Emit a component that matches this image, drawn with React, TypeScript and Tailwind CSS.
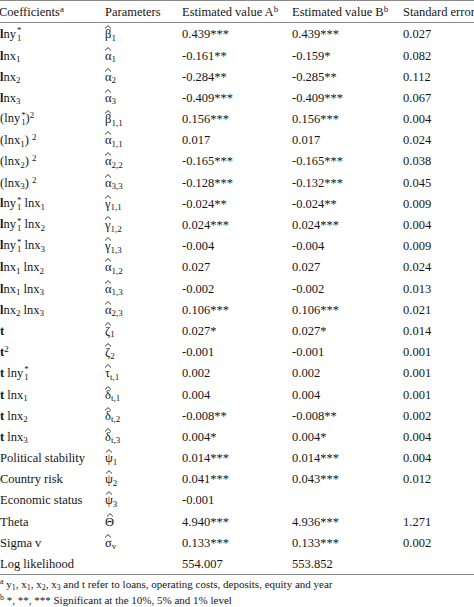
import React from "react";

type Row = {
  coef: React.ReactNode;
  param: React.ReactNode;
  a: string;
  b: string;
  se: string;
};

function Sub({ children }: { children: React.ReactNode }) {
  return <span className="relative top-[0.28em] text-[0.72em] leading-none">{children}</span>;
}

function Sup({ children }: { children: React.ReactNode }) {
  return <span className="relative -top-[0.45em] text-[0.72em] leading-none">{children}</span>;
}

// y*₁ style: star above, index below
function Stack({ top, bottom }: { top: string; bottom: string }) {
  return (
    <span className="inline-flex flex-col items-start text-[0.7em] leading-[0.85] align-[0.5em] ml-px">
      <span>{top}</span>
      <span>{bottom}</span>
    </span>
  );
}

const Lny = () => (
  <span>
    <span className="font-bold">l</span>ny
    <Stack top="*" bottom="1" />
  </span>
);

const Lnx = ({ i, bold = true }: { i: string; bold?: boolean }) => (
  <span>
    {bold ? <span className="font-bold">l</span> : "l"}nx<Sub>{i}</Sub>
  </span>
);

const T = () => <span className="font-bold">t</span>;

function Hat({ sym, sub }: { sym: string; sub?: string }) {
  return (
    <span>
      <span className="relative inline-block">
        {sym}
        <svg
          className="absolute left-1/2 -translate-x-1/2 top-[-3px]"
          width="7"
          height="4"
          viewBox="0 0 7 4"
          fill="none"
        >
          <polyline points="0.5,3.5 3.5,0.6 6.5,3.5" stroke="#222" strokeWidth="0.9" />
        </svg>
      </span>
      {sub && <Sub>{sub}</Sub>}
    </span>
  );
}

const rows: Row[] = [
  { coef: <Lny />, param: <Hat sym="β" sub="1" />, a: "0.439***", b: "0.439***", se: "0.027" },
  { coef: <Lnx i="1" />, param: <Hat sym="α" sub="1" />, a: "-0.161**", b: "-0.159*", se: "0.082" },
  { coef: <Lnx i="2" />, param: <Hat sym="α" sub="2" />, a: "-0.284**", b: "-0.285**", se: "0.112" },
  { coef: <Lnx i="3" />, param: <Hat sym="α" sub="3" />, a: "-0.409***", b: "-0.409***", se: "0.067" },
  {
    coef: (
      <span>
        (lny<Stack top="*" bottom="1" />)<Sup>2</Sup>
      </span>
    ),
    param: <Hat sym="β" sub="1,1" />,
    a: "0.156***",
    b: "0.156***",
    se: "0.004",
  },
  {
    coef: (
      <span>
        (lnx<Sub>1</Sub>) <Sup>2</Sup>
      </span>
    ),
    param: <Hat sym="α" sub="1,1" />,
    a: "0.017",
    b: "0.017",
    se: "0.024",
  },
  {
    coef: (
      <span>
        (lnx<Sub>2</Sub>) <Sup>2</Sup>
      </span>
    ),
    param: <Hat sym="α" sub="2,2" />,
    a: "-0.165***",
    b: "-0.165***",
    se: "0.038",
  },
  {
    coef: (
      <span>
        (lnx<Sub>3</Sub>) <Sup>2</Sup>
      </span>
    ),
    param: <Hat sym="α" sub="3,3" />,
    a: "-0.128***",
    b: "-0.132***",
    se: "0.045",
  },
  {
    coef: (
      <span>
        <Lny /> <Lnx i="1" bold={false} />
      </span>
    ),
    param: <Hat sym="γ" sub="1,1" />,
    a: "-0.024**",
    b: "-0.024**",
    se: "0.009",
  },
  {
    coef: (
      <span>
        <Lny /> <Lnx i="2" bold={false} />
      </span>
    ),
    param: <Hat sym="γ" sub="1,2" />,
    a: "0.024***",
    b: "0.024***",
    se: "0.004",
  },
  {
    coef: (
      <span>
        <Lny /> <Lnx i="3" bold={false} />
      </span>
    ),
    param: <Hat sym="γ" sub="1,3" />,
    a: "-0.004",
    b: "-0.004",
    se: "0.009",
  },
  {
    coef: (
      <span>
        <Lnx i="1" /> <Lnx i="2" bold={false} />
      </span>
    ),
    param: <Hat sym="α" sub="1,2" />,
    a: "0.027",
    b: "0.027",
    se: "0.024",
  },
  {
    coef: (
      <span>
        <Lnx i="1" /> <Lnx i="3" bold={false} />
      </span>
    ),
    param: <Hat sym="α" sub="1,3" />,
    a: "-0.002",
    b: "-0.002",
    se: "0.013",
  },
  {
    coef: (
      <span>
        <Lnx i="2" /> <Lnx i="3" bold={false} />
      </span>
    ),
    param: <Hat sym="α" sub="2,3" />,
    a: "0.106***",
    b: "0.106***",
    se: "0.021",
  },
  { coef: <T />, param: <Hat sym="ζ" sub="1" />, a: "0.027*", b: "0.027*", se: "0.014" },
  {
    coef: (
      <span>
        <T />
        <Sup>2</Sup>
      </span>
    ),
    param: <Hat sym="ζ" sub="2" />,
    a: "-0.001",
    b: "-0.001",
    se: "0.001",
  },
  {
    coef: (
      <span>
        <T /> lny<Stack top="*" bottom="1" />
      </span>
    ),
    param: <Hat sym="τ" sub="t,1" />,
    a: "0.002",
    b: "0.002",
    se: "0.001",
  },
  {
    coef: (
      <span>
        <T /> <Lnx i="1" bold={false} />
      </span>
    ),
    param: <Hat sym="δ" sub="t,1" />,
    a: "0.004",
    b: "0.004",
    se: "0.001",
  },
  {
    coef: (
      <span>
        <T /> <Lnx i="2" bold={false} />
      </span>
    ),
    param: <Hat sym="δ" sub="t,2" />,
    a: "-0.008**",
    b: "-0.008**",
    se: "0.002",
  },
  {
    coef: (
      <span>
        <T /> <Lnx i="3" bold={false} />
      </span>
    ),
    param: <Hat sym="δ" sub="t,3" />,
    a: "0.004*",
    b: "0.004*",
    se: "0.004",
  },
  { coef: "Political stability", param: <Hat sym="ψ" sub="1" />, a: "0.014***", b: "0.014***", se: "0.004" },
  { coef: "Country risk", param: <Hat sym="ψ" sub="2" />, a: "0.041***", b: "0.043***", se: "0.012" },
  { coef: "Economic status", param: <Hat sym="ψ" sub="3" />, a: "-0.001", b: "", se: "" },
  { coef: "Theta", param: <Hat sym="Θ" />, a: "4.940***", b: "4.936***", se: "1.271" },
  { coef: "Sigma v", param: <Hat sym="σ" sub="v" />, a: "0.133***", b: "0.133***", se: "0.002" },
  { coef: "Log likelihood", param: "", a: "554.007", b: "553.852", se: "" },
];

const grid = "grid grid-cols-[105px_77px_110px_111px_1fr] items-center";

export default function App() {
  return (
    <div
      className="w-[474px] h-[607px] overflow-hidden bg-white text-[#161616] whitespace-nowrap text-[12.5px]"
      style={{ fontFamily: '"Liberation Serif", "Times New Roman", serif' }}
    >
      <div className={`${grid} h-[23px] leading-none border-t-[1.5px] border-b-[1.5px] border-[#8a8a8a] pt-[2px]`}>
        <div className="-ml-[1px]">
          Coefficients<Sup>a</Sup>
        </div>
        <div>Parameters</div>
        <div>
          Estimated value A<Sup>b</Sup>
        </div>
        <div>
          Estimated value B<Sup>b</Sup>
        </div>
        <div>Standard error</div>
      </div>

      <div className="border-b-[1.5px] border-[#8a8a8a]">
        {rows.map((r, i) => (
          <div key={i} className={`${grid} h-[21.2px] leading-none pt-[2px]`}>
            <div>{r.coef}</div>
            <div>{r.param}</div>
            <div>{r.a}</div>
            <div>{r.b}</div>
            <div>{r.se}</div>
          </div>
        ))}
      </div>

      <div className="text-[11px] leading-[16px] pt-[1px]">
        <div>
          <Sup>a</Sup> y<Sub>1</Sub>, x<Sub>1</Sub>, x<Sub>2</Sub>, x<Sub>3</Sub> and t refer to loans, operating costs,
          deposits, equity and year
        </div>
        <div>
          <Sup>b</Sup> *, **, *** Significant at the 10%, 5% and 1% level
        </div>
      </div>
    </div>
  );
}
